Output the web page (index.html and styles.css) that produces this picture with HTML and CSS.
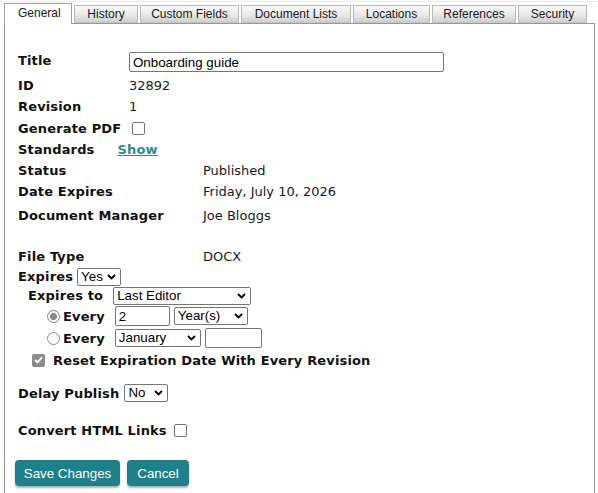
FILE: index.html
```html
<!DOCTYPE html>
<html>
<head>
<meta charset="utf-8">
<link rel="stylesheet" href="styles.css">
</head>
<body>
<div class="topline"></div>
<div class="tabs">
  <div class="tab active w-general">General</div>
  <div class="tab w-history">History</div>
  <div class="tab w-custom">Custom Fields</div>
  <div class="tab w-doclists">Document Lists</div>
  <div class="tab w-locations">Locations</div>
  <div class="tab w-references">References</div>
  <div class="tab w-security">Security</div>
</div>
<div class="panel">
  <div class="row r-title col-a">
    <span class="label title-label">Title</span>
    <input class="text title-input" type="text" value="Onboarding guide">
  </div>
  <div class="row r-id col-a">
    <span class="label">ID</span>
    <span class="value">32892</span>
  </div>
  <div class="row r-rev col-a">
    <span class="label">Revision</span>
    <span class="value">1</span>
  </div>
  <div class="row r-pdf">
    <span class="label">Generate PDF</span>
    <input class="cb pdf-cb" type="checkbox">
  </div>
  <div class="row r-std">
    <span class="label">Standards</span>
    <a class="show-link" href="#">Show</a>
  </div>
  <div class="row r-status col-b">
    <span class="label">Status</span>
    <span class="value">Published</span>
  </div>
  <div class="row r-date col-b">
    <span class="label">Date Expires</span>
    <span class="value">Friday, July 10, 2026</span>
  </div>
  <div class="row r-mgr col-b">
    <span class="label">Document Manager</span>
    <span class="value">Joe Bloggs</span>
  </div>
  <div class="row r-type col-b">
    <span class="label">File Type</span>
    <span class="value">DOCX</span>
  </div>
  <div class="row r-exp">
    <span class="label">Expires</span>
    <span class="selwrap sw-yes">
      <select class="sel"><option>Yes</option></select>
      <svg class="chev" width="9" height="6" viewBox="0 0 9 6"><path d="M1 1 L4.5 4.5 L8 1" fill="none" stroke="#000" stroke-width="1.8"/></svg>
    </span>
  </div>
  <div class="row r-expto">
    <span class="label">Expires to</span>
    <span class="selwrap sw-editor">
      <select class="sel"><option>Last Editor</option></select>
      <svg class="chev" width="9" height="6" viewBox="0 0 9 6"><path d="M1 1 L4.5 4.5 L8 1" fill="none" stroke="#000" stroke-width="1.8"/></svg>
    </span>
  </div>
  <div class="row r-every1">
    <input class="radio" type="radio" name="every" checked disabled>
    <span class="label every-label">Every</span>
    <input class="text num-input" type="text" value="2">
    <span class="selwrap sw-year">
      <select class="sel"><option>Year(s)</option></select>
      <svg class="chev" width="9" height="6" viewBox="0 0 9 6"><path d="M1 1 L4.5 4.5 L8 1" fill="none" stroke="#000" stroke-width="1.8"/></svg>
    </span>
  </div>
  <div class="row r-every2">
    <input class="radio" type="radio" name="every" disabled>
    <span class="label every-label">Every</span>
    <span class="selwrap sw-month">
      <select class="sel"><option>January</option></select>
      <svg class="chev" width="9" height="6" viewBox="0 0 9 6"><path d="M1 1 L4.5 4.5 L8 1" fill="none" stroke="#000" stroke-width="1.8"/></svg>
    </span>
    <input class="text day-input" type="text" value="">
  </div>
  <div class="row r-reset">
    <span class="cb-box checked-disabled">
      <svg width="9" height="8" viewBox="0 0 9 8"><path d="M1 4 L3.5 6.5 L8 1.2" fill="none" stroke="#fff" stroke-width="1.8"/></svg>
    </span>
    <span class="label">Reset Expiration Date With Every Revision</span>
  </div>
  <div class="row r-delay">
    <span class="label">Delay Publish</span>
    <span class="selwrap sw-no">
      <select class="sel"><option>No</option></select>
      <svg class="chev" width="9" height="6" viewBox="0 0 9 6"><path d="M1 1 L4.5 4.5 L8 1" fill="none" stroke="#000" stroke-width="1.8"/></svg>
    </span>
  </div>
  <div class="row r-convert">
    <span class="label">Convert HTML Links</span>
    <input class="cb convert-cb" type="checkbox">
  </div>
  <div class="buttons">
    <button class="btn btn-save">Save Changes</button>
    <button class="btn btn-cancel">Cancel</button>
  </div>
</div>
</body>
</html>
```

FILE: styles.css
```css
html, body {
  margin: 0;
  padding: 0;
  background: #ffffff;
  font-family: "DejaVu Sans", Verdana, sans-serif;
  font-size: 13px;
  color: #111;
  overflow: hidden;
}

.topline {
  height: 1px;
  margin-top: 1px;
  background: #ececec;
}

.tabs {
  display: flex;
  align-items: flex-end;
  gap: 2px;
  padding-left: 4px;
  margin-top: 1px;
  height: 20px;
  position: relative;
  z-index: 2;
}

.tab {
  box-sizing: border-box;
  height: 18px;
  margin-bottom: 0;
  border: 1px solid #b9b9b9;
  border-bottom-color: #c4c4c4;
  background: linear-gradient(#fbfbfb, #e9e9e9 55%, #cfcfcf);
  font-family: "Liberation Sans", Arial, sans-serif;
  font-size: 12px;
  color: #1a1a1a;
  text-align: center;
  line-height: 17px;
}

.tab.active {
  height: 21px;
  margin-bottom: -1px;
  background: #ffffff;
  border: 1px solid #9aa3a3;
  border-bottom: none;
  line-height: 19px;
  text-align: left;
  padding-left: 13px;
}

.w-general { width: 68px; }
.w-history { width: 64px; }
.w-custom { width: 99px; }
.w-doclists { width: 110px; }
.w-locations { width: 77px; }
.w-references { width: 84px; }
.w-security { width: 69px; }

.panel {
  box-sizing: border-box;
  margin-left: 4px;
  width: 591px;
  height: 480px;
  border: 1px solid #909c9c;
  padding: 27px 0 0 13px;
}

.row {
  display: flex;
  align-items: center;
}

.label {
  font-weight: bold;
  color: #111;
  letter-spacing: 0.15px;
  white-space: nowrap;
}

.value {
  color: #1a1a1a;
}

.col-a .label { width: 111px; flex: none; }
.col-b .label { width: 185px; flex: none; }

.r-title { height: 24px; align-items: flex-start; }
.title-label { margin-top: 2px; }
.title-input { margin-top: 1px !important; }
.r-id { height: 21px; }
.r-rev { height: 21px; }
.r-pdf { height: 22px; }
.r-std { height: 21px; }
.r-status { height: 21px; }
.r-date { height: 21px; }
.r-mgr { height: 26px; }
.r-type { height: 22px; margin-top: 17px; }
.r-exp { height: 19px; }
.r-expto { height: 19px; padding-left: 10px; }
.r-every1 { height: 22px; padding-left: 29px; }
.r-every2 { height: 22px; padding-left: 29px; }
.r-reset { height: 22px; padding-left: 14px; }
.r-delay { height: 22px; margin-top: 11px; }
.r-convert { height: 22px; margin-top: 15px; }

input.text, select.sel, .btn {
  font-family: "Liberation Sans", Arial, sans-serif;
  font-size: 13.33px;
}

input.text {
  box-sizing: border-box;
  height: 20px;
  margin: 0;
  padding: 1px 3px;
  border: 1px solid #767676;
  border-radius: 2px;
  color: #000;
  background: #fff;
}

.title-input { width: 315px; }
.num-input { width: 55px; margin-left: 10px !important; }
.day-input { width: 57px; margin-left: 4px !important; }

.selwrap {
  position: relative;
  display: inline-flex;
  flex: none;
}

select.sel {
  -webkit-appearance: none;
  appearance: none;
  box-sizing: border-box;
  width: 100%;
  height: 18px;
  margin: 0;
  padding: 0 0 0 3px;
  color: #000;
  background: #fff;
  border: 1px solid #767676;
  border-radius: 2px;
  line-height: 16px;
}

.chev {
  position: absolute;
  right: 5px;
  top: 6px;
  pointer-events: none;
}

.sw-yes { width: 44px; margin-left: 4px; }
.sw-editor { width: 138px; margin-left: 10px; }
.sw-year { width: 74px; margin-left: 4px; }
.sw-month { width: 86px; margin-left: 10px; }
.sw-no { width: 44px; margin-left: 5px; }

.cb, .radio {
  -webkit-appearance: none;
  appearance: none;
  box-sizing: border-box;
  width: 13px;
  height: 13px;
  margin: 0;
  flex: none;
  background: #fff;
}

.cb {
  border: 1px solid #767676;
  border-radius: 2px;
}

.radio {
  border: 1px solid #8f8f8f;
  border-radius: 50%;
  margin-right: 3px;
}

.radio:checked {
  border-color: #7d7d7d;
  background: radial-gradient(circle, #8a8a8a 0 3.2px, #fff 3.8px);
}

.pdf-cb { margin-left: 11px; }
.convert-cb { margin-left: 7px; }

.cb-box {
  box-sizing: border-box;
  width: 13px;
  height: 13px;
  flex: none;
  margin-right: 8px;
  border-radius: 2px;
  display: flex;
  align-items: center;
  justify-content: center;
}

.cb-box.checked-disabled {
  background: #8d8d8d;
}

.show-link {
  margin-left: 23px;
  color: #2a8b93;
  font-weight: bold;
  letter-spacing: 0.15px;
  text-decoration: underline;
}

.buttons {
  display: flex;
  gap: 7px;
  margin-left: -3px;
  margin-top: 19px;
}

.btn {
  box-sizing: border-box;
  height: 26px;
  padding: 0;
  border: none;
  border-radius: 4px;
  background: #1e8088;
  color: #fff;
  white-space: nowrap;
  box-shadow: 0 2px 2px rgba(0, 0, 0, 0.3);
}

.btn-save { width: 105px; }
.btn-cancel { width: 62px; }
```
